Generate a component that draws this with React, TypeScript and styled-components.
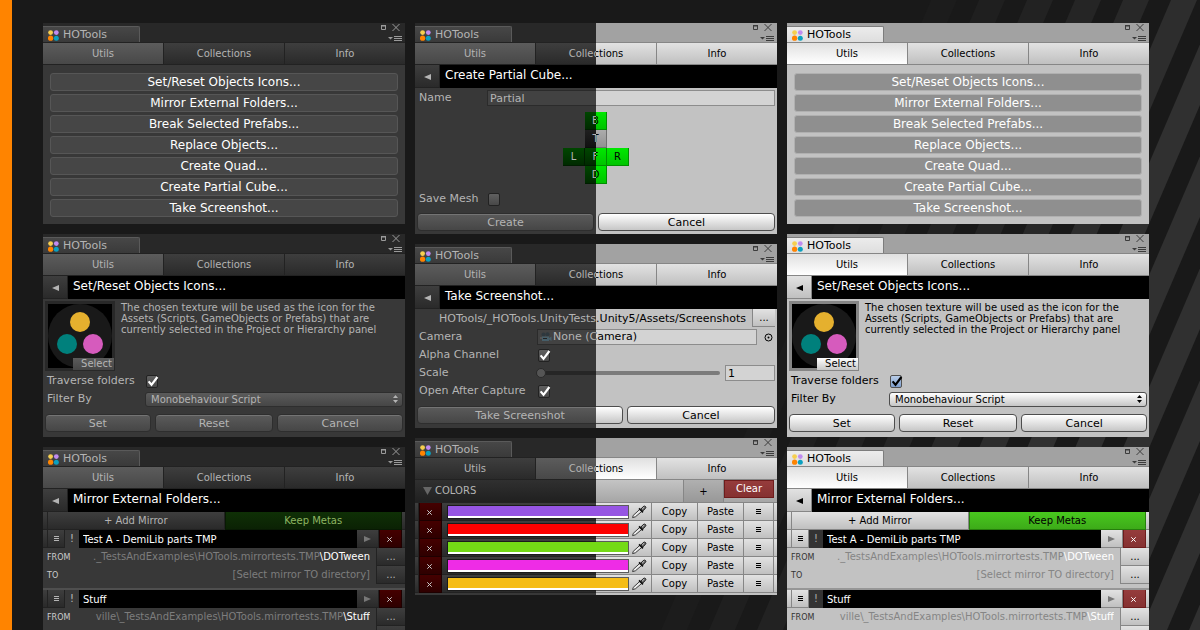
import React, { useId } from 'react';
import styled, { createGlobalStyle, css, ThemeProvider, useTheme } from 'styled-components';

type Side = 'left' | 'right';

const dark = {
  name: 'dark',
  text: '#b4b4b4',
  panel: '#383838',
  header: '#282828',
  edge: '#222222',
  tab: 'linear-gradient(#474747, #3a3a3a)',
  tabEdge: '#5a5a5a',
  bar: 'linear-gradient(#3e3e3e, #2a2a2a)',
  barOn: 'linear-gradient(#5c5c5c, #484848)',
  collection: 'linear-gradient(#303030, #202020)',
  collectionButton: 'linear-gradient(#303030, #202020)',
  utility: '#464646',
  utilityEdge: '#565656',
  utilityText: '#ffffff',
  button: 'linear-gradient(#5b5b5b, #464646)',
  buttonEdge: '#2e2e2e',
  buttonShine: '#747474',
  field: '#424242',
  fieldEdge: '#2b2b2b',
  check: 'linear-gradient(#606060, #484848)',
  checkEdge: '#222222',
  checkMark: '#ffffff',
  texture: '#282828',
  green: 'linear-gradient(#0f3006, #0b2204)',
  greenEdge: '#081a03',
  greenText: '#8fb562',
  red: 'linear-gradient(#450000, #2e0000)',
  redEdge: '#1e0000',
  redText: '#cccccc',
  faceOn: 'linear-gradient(#004600, #002a00)',
  faceOnEdge: '#001d00',
  faceOff: 'linear-gradient(#1f1f1f, #111111)',
  faceOffEdge: '#0c0c0c',
  control: '#9a9a9a',
  warnBack: '#383838',
  warn: '#b0b0b0',
  caption: '#cccccc',
  muted: '#7d7d7d',
  divider: '#4f4f4f',
  track: '#262626',
  colorEdge: '#1b1b1b',
};

const light: typeof dark = {
  name: 'light',
  text: '#000000',
  panel: '#c2c2c2',
  header: '#a2a2a2',
  edge: '#868686',
  tab: 'linear-gradient(#ececec, #dedede)',
  tabEdge: '#7d7d7d',
  bar: 'linear-gradient(#e2e2e2, #c0c0c0)',
  barOn: 'linear-gradient(#e0e0e0, #ffffff)',
  collection: 'linear-gradient(#c4c4c4, #a6a6a6)',
  collectionButton: 'linear-gradient(#b0b0b0, #989898)',
  utility: '#8f8f8f',
  utilityEdge: '#b0b0b0',
  utilityText: '#ffffff',
  button: 'linear-gradient(#ffffff, #c6c6c6)',
  buttonEdge: '#4d4d4d',
  buttonShine: '#ffffff',
  field: '#d3d3d3',
  fieldEdge: '#8c8c8c',
  check: 'linear-gradient(#b9cde8, #7f9fce)',
  checkEdge: '#515151',
  checkMark: '#000000',
  texture: '#858585',
  green: 'linear-gradient(#48c81e, #3dab19)',
  greenEdge: '#267f0c',
  greenText: '#000000',
  red: 'linear-gradient(#963c3c, #853131)',
  redEdge: '#6e1c1c',
  redText: '#ffffff',
  faceOn: 'linear-gradient(#00e800, #00c400)',
  faceOnEdge: '#008f00',
  faceOff: 'linear-gradient(#acacac, #929292)',
  faceOffEdge: '#707070',
  control: '#3c3c3c',
  warnBack: '#333333',
  warn: '#a0a0a0',
  caption: '#333333',
  muted: '#858585',
  divider: '#969696',
  track: '#7b7b7b',
  colorEdge: '#5b5b5b',
};

type Skin = typeof dark & { side?: Side };
const skinOf = (p: { theme: unknown }) => p.theme as Skin;

/* In a two-skin panel, a part that belongs to one half is shown by that half only. */
type At = { $at?: Side };
const half = css<At>`
  ${(p) => {
    const side = skinOf(p).side;
    return p.$at && side && p.$at !== side ? 'visibility: hidden;' : '';
  }}
`;

const GlobalStyle = createGlobalStyle`
  *, *::before, *::after { box-sizing: border-box; }
  body { margin: 0; background: #191919; }
  button, input, select {
    font: inherit; color: inherit; margin: 0; padding: 0; border: 0;
    border-radius: 0; background: none; appearance: none; min-width: 0;
  }
  svg { display: block; flex: none; }
`;

const Page = styled.main`
  position: relative;
  height: 100vh;
  overflow: hidden;
  border-left: 12px solid #ff8400;
  background: #191919;
  font-family: 'DejaVu Sans', Verdana, sans-serif;
  font-size: 11px;
  line-height: 16px;
`;

const StripeArt = styled.svg`
  position: absolute;
  top: 0;
  right: 0;
`;

const Columns = styled.div`
  position: relative;
  display: grid;
  grid-template-columns: repeat(3, minmax(0, 1fr));
  gap: 10px;
  padding: 23px 51px 0 31px;
`;

const Column = styled.div`
  display: flex;
  flex-direction: column;
  gap: 10px;
`;

const Panel = styled.section`
  background: ${(p) => skinOf(p).panel};
  color: ${(p) => skinOf(p).text};
`;

const Stack = styled.div`
  display: grid;
`;

const Layer = styled.div<{ $side: Side }>`
  grid-area: 1 / 1;
  min-width: 0;
  clip-path: ${(p) => (p.$side === 'left' ? 'inset(0 50% 0 0)' : 'inset(0 0 0 50%)')};
`;

const Header = styled.header`
  display: flex;
  justify-content: space-between;
  height: 20px;
  padding-top: 3px;
  background: ${(p) => skinOf(p).header};
  border-bottom: 1px solid ${(p) => skinOf(p).edge};
`;

const WindowTab = styled.h2<At>`
  display: flex;
  align-items: center;
  gap: 4px;
  width: 97px;
  height: 16px;
  margin: 0;
  padding: 1px 0 0 5px;
  font-size: 11px;
  font-weight: 400;
  line-height: 16px;
  background: ${(p) => skinOf(p).tab};
  border-top: 1px solid ${(p) => skinOf(p).tabEdge};
  border-right: 1px solid ${(p) => skinOf(p).tabEdge};
  border-top-right-radius: 2px;
  ${half}
`;

const WindowControls = styled.div<At>`
  display: grid;
  grid-template-columns: 5px 8px;
  column-gap: 6px;
  row-gap: 4px;
  align-content: start;
  justify-items: end;
  margin-top: -2px;
  padding-right: 5px;
  color: ${(p) => skinOf(p).control};
  ${half}
`;

const ControlButton = styled.button<{ $wide?: boolean }>`
  height: 7px;
  grid-column: ${(p) => (p.$wide ? '1 / -1' : 'auto')};
  margin-right: ${(p) => (p.$wide ? '-2px' : '0')};
`;

const Tabs = styled.nav`
  display: flex;
`;

const TabButton = styled.button<{ $on?: boolean } & At>`
  flex: 1;
  height: 22px;
  padding-top: 1px;
  font-size: 10px;
  background: ${(p) => (p.$on ? skinOf(p).barOn : skinOf(p).bar)};
  border-bottom: 1px solid ${(p) => skinOf(p).edge};
  border-right: 1px solid ${(p) => skinOf(p).edge};
  &:last-child { border-right: 0; }
  ${half}
`;

const TitleBar = styled.div`
  display: flex;
  height: 23px;
  background: #000000;
  color: #ffffff;
`;

const BackButton = styled.button<At>`
  display: grid;
  place-items: center;
  width: 25px;
  padding-top: 1px;
  color: ${(p) => skinOf(p).text};
  background: ${(p) => skinOf(p).bar};
  border-right: 1px solid ${(p) => skinOf(p).edge};
  border-bottom: 1px solid ${(p) => skinOf(p).edge};
  ${half}
`;

const Title = styled.h3<At>`
  margin: 0;
  padding: 2px 0 0 5px;
  font-size: 12px;
  font-weight: 400;
  line-height: 16px;
  ${half}
`;

const UtilityList = styled.div`
  display: grid;
  gap: 3px;
  padding: 8px 7px 7px;
`;

const UtilityButton = styled.button`
  height: 18px;
  font-size: 12px;
  line-height: 14px;
  color: ${(p) => skinOf(p).utilityText};
  background: ${(p) => skinOf(p).utility};
  border: 1px solid ${(p) => skinOf(p).utilityEdge};
  border-radius: 3px;
`;

const TextureRow = styled.div`
  display: flex;
  gap: 6px;
  height: 73px;
  padding: 2px 2px 1px;
`;

const TextureSlot = styled.div`
  display: grid;
  width: 70px;
  height: 70px;
  background: #000000;
  border: 3px solid ${(p) => skinOf(p).texture};
`;

const TextureArt = styled.svg`
  grid-area: 1 / 1;
`;

const SelectTexture = styled.button`
  grid-area: 1 / 1;
  align-self: end;
  justify-self: end;
  width: 41px;
  height: 12px;
  margin: 0 -2px -2px 0;
  padding-left: 6px;
  font-size: 10px;
  line-height: 12px;
  color: ${(p) => skinOf(p).text};
  background: ${(p) => skinOf(p).button};
`;

const Description = styled.p`
  flex: 1;
  margin: 0;
  padding-top: 1px;
  max-width: 268px;
  font-size: 10px;
  line-height: 11px;
`;

const FieldRow = styled.div<{ $label: number }>`
  display: grid;
  grid-template-columns: ${(p) => p.$label}px minmax(0, 1fr);
  align-items: center;
  height: 18px;
  padding: 0 2px 0 4px;
`;

const FieldLabel = styled.label<At>`
  white-space: nowrap;
  line-height: 16px;
  ${half}
`;

const CheckBoxShell = styled.span<At>`
  display: grid;
  width: 13px;
  height: 13px;
  margin-left: 1px;
  svg { grid-area: 1 / 1; pointer-events: none; color: ${(p) => skinOf(p).checkMark}; }
  ${half}
`;

const CheckBoxInput = styled.input`
  grid-area: 1 / 1;
  width: 12px;
  height: 13px;
  background: ${(p) => skinOf(p).check};
  border: 1px solid ${(p) => skinOf(p).checkEdge};
  border-radius: 2px;
`;

const SelectShell = styled.span`
  display: grid;
  align-items: center;
  svg { grid-area: 1 / 1; justify-self: end; margin-right: 5px; pointer-events: none; }
`;

const Select = styled.select`
  grid-area: 1 / 1;
  height: 15px;
  padding-left: 5px;
  font-size: 10px;
  line-height: 13px;
  color: ${(p) => skinOf(p).text};
  background: ${(p) => skinOf(p).button};
  border: 1px solid ${(p) => skinOf(p).buttonEdge};
  border-radius: 3px;
`;

const ButtonRow = styled.div<{ $columns: string; $bottom: number; $top: number }>`
  display: grid;
  grid-template-columns: ${(p) => p.$columns};
  gap: 4px;
  padding: ${(p) => `${p.$top}px 2px ${p.$bottom}px`};
`;

const PushButton = styled.button<At>`
  height: 18px;
  padding-top: 1px;
  font-size: 11px;
  line-height: 14px;
  color: ${(p) => skinOf(p).text};
  background: ${(p) => skinOf(p).button};
  border: 1px solid ${(p) => skinOf(p).buttonEdge};
  border-radius: 4px;
  box-shadow: inset 0 1px 0 ${(p) => skinOf(p).buttonShine};
  ${half}
`;

const Strip = styled.div`
  display: flex;
  height: 18px;
  padding-right: 3px;
  background: ${(p) => skinOf(p).bar};
  border-bottom: 1px solid ${(p) => skinOf(p).edge};
`;

const StripGap = styled.span<{ $width: number }>`
  width: ${(p) => p.$width}px;
  border-right: 1px solid ${(p) => skinOf(p).edge};
`;

const StripButton = styled.button<{ $width?: number } & At>`
  display: flex;
  align-items: center;
  justify-content: center;
  flex: ${(p) => (p.$width ? `0 0 ${p.$width}px` : '1 1 0')};
  height: 17px;
  font-size: 10px;
  line-height: 16px;
  border-right: 1px solid ${(p) => skinOf(p).edge};
  ${half}
`;

const KeepButton = styled(StripButton)`
  height: 18px;
  color: ${(p) => skinOf(p).greenText};
  background: ${(p) => skinOf(p).green};
  border: 1px solid ${(p) => skinOf(p).greenEdge};
  border-top: 0;
`;

const RemoveButton = styled(StripButton)`
  height: 18px;
  padding: 1px 2px 0 0;
  color: ${(p) => skinOf(p).redText};
  background: ${(p) => skinOf(p).red};
  border: 1px solid ${(p) => skinOf(p).redEdge};
  border-top: 0;
`;

const Warn = styled.span`
  display: grid;
  place-items: center;
  width: 14px;
  height: 18px;
  font-size: 11px;
  color: ${(p) => skinOf(p).warn};
  background: ${(p) => skinOf(p).warnBack};
`;

const MirrorName = styled.input`
  flex: 1;
  height: 18px;
  padding-left: 4px;
  font-size: 10px;
  color: #ffffff;
  background: #000000;
`;

const Mirror = styled.article`
  padding-bottom: 4px;
  border-bottom: 2px solid ${(p) => skinOf(p).divider};
`;

const DirRow = styled.div`
  display: flex;
  align-items: center;
  height: 18px;
  padding-left: 4px;
`;

const DirCaption = styled.span`
  flex: 0 0 31px;
  padding-top: 2px;
  font-size: 8px;
  color: ${(p) => skinOf(p).caption};
`;

const DirPath = styled.span`
  display: flex;
  flex: 1;
  justify-content: flex-end;
  min-width: 0;
  overflow: hidden;
  margin-right: 6px;
  font-size: 10px;
  line-height: 16px;
  white-space: nowrap;
  color: ${(p) => skinOf(p).muted};
  b { font-weight: 400; color: #ffffff; }
`;

const BrowseButton = styled.button<{ $width: number } & At>`
  flex: 0 0 ${(p) => p.$width}px;
  height: 18px;
  font-size: 10px;
  line-height: 16px;
  background: ${(p) => skinOf(p).bar};
  border-left: 1px solid ${(p) => skinOf(p).edge};
  border-bottom: 1px solid ${(p) => skinOf(p).edge};
  ${half}
`;

const Spaced = styled.div<{ $top: number; $bottom?: number }>`
  padding: ${(p) => `${p.$top}px 0 ${p.$bottom ?? 0}px`};
`;

const TextField = styled.input`
  width: 100%;
  height: 16px;
  padding-left: 2px;
  font-size: 11px;
  line-height: 14px;
  color: ${(p) => skinOf(p).text};
  background: ${(p) => skinOf(p).field};
  border: 1px solid ${(p) => skinOf(p).fieldEdge};
`;

const CubeGrid = styled.div`
  display: grid;
  grid-template-columns: repeat(3, 22px);
  grid-template-areas: '. b .' '. t .' 'l f r' '. d .';
  grid-auto-rows: 18px;
  justify-content: center;
  padding: 5px 0 6px;
`;

const Face = styled.button<{ $area: string; $off?: boolean } & At>`
  grid-area: ${(p) => p.$area};
  font-size: 10px;
  line-height: 16px;
  color: ${(p) => skinOf(p).text};
  background: ${(p) => (p.$off ? skinOf(p).faceOff : skinOf(p).faceOn)};
  border: solid ${(p) => (p.$off ? skinOf(p).faceOffEdge : skinOf(p).faceOnEdge)};
  border-width: 0 1px 1px 0;
  ${half}
`;

const PathRow = styled.div`
  display: flex;
  height: 18px;
  padding: 0 2px 0 4px;
`;

const PathText = styled.span`
  display: flex;
  flex: 1;
  justify-content: flex-end;
  min-width: 0;
  overflow: hidden;
  margin-right: 6px;
  line-height: 20px;
  white-space: nowrap;
`;

const ObjectRow = styled.div`
  display: grid;
  grid-template-columns: minmax(0, 1fr) 14px;
  column-gap: 4px;
  align-items: center;
`;

const ObjectField = styled.button`
  display: flex;
  align-items: center;
  gap: 1px;
  height: 16px;
  padding-left: 2px;
  line-height: 14px;
  background: ${(p) => skinOf(p).field};
  border: 1px solid ${(p) => skinOf(p).fieldEdge};
`;

const PickerButton = styled.button<At>`
  display: grid;
  place-items: center;
  ${half}
`;

const ScaleRow = styled.div`
  display: grid;
  grid-template-columns: minmax(0, 1fr) 50px;
  column-gap: 5px;
  align-items: center;
`;

const Slider = styled.input`
  width: 100%;
  height: 12px;
  &::-webkit-slider-runnable-track {
    height: 4px;
    border-radius: 2px;
    background: ${(p) => skinOf(p).track};
  }
  &::-webkit-slider-thumb {
    appearance: none;
    width: 10px;
    height: 10px;
    margin-top: -3px;
    border: 1px solid #2a2a2a;
    border-radius: 5px;
    background: #555555;
  }
`;

const CollectionBar = styled.div`
  display: flex;
  height: 23px;
  padding-right: 3px;
  background: ${(p) => skinOf(p).collection};
  border-bottom: 1px solid ${(p) => skinOf(p).edge};
`;

const CollectionToggle = styled.button<At>`
  display: flex;
  align-items: center;
  flex: 1;
  gap: 3px;
  padding-left: 8px;
  font-size: 10px;
  ${half}
  svg { color: #666666; }
`;

const AddColor = styled.button<At>`
  width: 41px;
  padding-top: 2px;
  font-size: 10px;
  background: ${(p) => skinOf(p).collectionButton};
  border: solid ${(p) => skinOf(p).edge};
  border-width: 0 1px;
  ${half}
`;

const ClearButton = styled.button<At>`
  width: 50px;
  height: 18px;
  font-size: 10px;
  color: ${(p) => skinOf(p).redText};
  background: ${(p) => skinOf(p).red};
  border: 1px solid ${(p) => skinOf(p).redEdge};
  ${half}
`;

const Swatch = styled.button<{ $color: string }>`
  flex: 1;
  height: 14px;
  margin: 2px 2px 0 5px;
  background: ${(p) => p.$color};
  border: 1px solid ${(p) => skinOf(p).colorEdge};
  box-shadow: inset 0 -2px 0 #ffffff;
`;

const Dropper = styled.button<At>`
  width: 21px;
  height: 17px;
  border-right: 1px solid ${(p) => skinOf(p).edge};
  ${half}
`;

const Logo = () => (
  <svg width="11" height="11" viewBox="0 0 11 11" aria-hidden="true">
    <circle cx="2.6" cy="2.6" r="2.4" fill="#f6cf4f" />
    <circle cx="8.3" cy="2.6" r="2.4" fill="#c08cf0" />
    <circle cx="2.6" cy="8.2" r="2.6" fill="#ff8400" />
    <circle cx="8.3" cy="8.2" r="2.5" fill="#0aa0c0" />
  </svg>
);

const ListGlyph = () => (
  <svg width="5" height="5" viewBox="0 0 5 5" aria-hidden="true">
    <path d="M0 .5h5M0 2.5h5M0 4.5h5" stroke="currentColor" />
  </svg>
);

const CrossGlyph = () => (
  <svg width="5" height="5" viewBox="0 0 5 5" aria-hidden="true">
    <path d="M.3.3l4.4 4.4M4.7.3L.3 4.7" stroke="currentColor" />
  </svg>
);

const CheckGlyph = () => (
  <svg width="13" height="13" viewBox="0 0 13 13" aria-hidden="true">
    <path d="M2.6 6.4l2.9 3.4L11.4 2" fill="none" stroke="currentColor" strokeWidth="2.2" />
  </svg>
);

const DropperGlyph = () => (
  <svg width="16" height="14" viewBox="0 0 16 14" aria-hidden="true">
    <path d="M1.6 12.6l.6-2.2L9 4.2l2 2-6.600 5.600z" fill="#ececec" stroke="#2a2a2a" strokeWidth=".9" />
    <path d="M8 3.400l4 4" stroke="#111" strokeWidth="1.600" />
    <path d="M9.800 4.200l2.400-2.600q1.400-1 2.300-.1t-.2 2.100l-2.500 2.300z" fill="#6a6a6a" stroke="#111" strokeWidth=".9" />
    <path d="M11.200 4l2-1.900" stroke="#dddddd" strokeWidth=".8" />
  </svg>
);

const CameraGlyph = () => (
  <svg width="12" height="10" viewBox="0 0 12 10" aria-hidden="true">
    <circle cx="3.5" cy="2.5" r="2" fill="#2e383e" />
    <circle cx="7.5" cy="2.2" r="2" fill="#2e383e" />
    <path d="M2 4.500h7v4.500H2zM9 6l2.500-1.500v4.500L9 7.600z" fill="#465e69" />
    <path d="M3 6.500h4" stroke="#222" />
    <path d="M0 6h2" stroke="#666" />
  </svg>
);

const shades = ['#1c1c1c', '#1f1f1f', '#222222', '#252525', '#282828', '#2d2d2d', '#303030'];

function Stripes() {
  const starts = Array.from({ length: 12 }, (_, i) => 31 + i * 48);
  return (
    <StripeArt width="300" height="630" viewBox="0 0 300 630" overflow="visible" aria-hidden="true">
      {starts.map((x, i) => (
        <path key={x} d={`M${x} 0h26l-270 630h-26z`} fill={shades[Math.min(i, 6)]} />
      ))}
    </StripeArt>
  );
}

const tabNames = ['Utils', 'Collections', 'Info'];
const tabSides: (Side | undefined)[] = ['left', undefined, 'right'];

function WindowFrame({ active = 'Utils', children }: { active?: string; children: React.ReactNode }) {
  return (
    <Panel>
      <Header>
        <WindowTab $at="left"><Logo />HOTools</WindowTab>
        <WindowControls $at="right">
          <ControlButton aria-label="Maximize">
            <svg width="5" height="5" viewBox="0 0 5 5"><path d="M.5 1h4v3.5h-4zM0 .5h5" fill="none" stroke="currentColor" /></svg>
          </ControlButton>
          <ControlButton aria-label="Close">
            <svg width="8" height="7" viewBox="0 0 8 7"><path d="M.5 0l7 7M7.5 0l-7 7" stroke="currentColor" /></svg>
          </ControlButton>
          <ControlButton $wide aria-label="Window menu">
            <svg width="14" height="5" viewBox="0 0 14 5">
              <path d="M0 1h5L2.500 3.500z" fill="currentColor" />
              <path d="M6 .5h8M6 2.500h8M6 4.500h8" stroke="currentColor" />
            </svg>
          </ControlButton>
        </WindowControls>
      </Header>
      <Tabs>
        {tabNames.map((name, i) => (
          <TabButton key={name} $on={name === active} $at={tabSides[i]}>{name}</TabButton>
        ))}
      </Tabs>
      {children}
    </Panel>
  );
}

function TitleLine({ children }: { children: string }) {
  return (
    <TitleBar>
      <BackButton aria-label="Back" $at="left">
        <svg width="7" height="6" viewBox="0 0 7 6"><path d="M7 0v6L0 3z" fill="currentColor" /></svg>
      </BackButton>
      <Title $at="left">{children}</Title>
    </TitleBar>
  );
}

function CheckBox({ id, checked, at }: { id: string; checked?: boolean; at?: Side }) {
  return (
    <CheckBoxShell $at={at}>
      <CheckBoxInput type="checkbox" id={id} defaultChecked={checked} />
      {checked && <CheckGlyph />}
    </CheckBoxShell>
  );
}

const utilities = [
  'Set/Reset Objects Icons...',
  'Mirror External Folders...',
  'Break Selected Prefabs...',
  'Replace Objects...',
  'Create Quad...',
  'Create Partial Cube...',
  'Take Screenshot...',
];

function UtilsWindow() {
  return (
    <WindowFrame>
      <UtilityList>
        {utilities.map((name) => <UtilityButton key={name}>{name}</UtilityButton>)}
      </UtilityList>
    </WindowFrame>
  );
}

function IconsWindow() {
  const id = useId();
  return (
    <WindowFrame>
      <TitleLine>Set/Reset Objects Icons...</TitleLine>
      <TextureRow>
        <TextureSlot>
          <TextureArt width="64" height="64" viewBox="0 0 64 64" aria-hidden="true">
            <circle cx="32" cy="32" r="32" fill="#191919" />
            <circle cx="32" cy="18" r="10" fill="#e5b02e" />
            <circle cx="19" cy="40" r="10" fill="#00807c" />
            <circle cx="45" cy="40" r="10" fill="#d65bbd" />
          </TextureArt>
          <SelectTexture>Select</SelectTexture>
        </TextureSlot>
        <Description>
          The chosen texture will be used as the icon for the Assets (Scripts, GameObjects or
          Prefabs) that are currently selected in the Project or Hierarchy panel
        </Description>
      </TextureRow>
      <FieldRow $label={98}>
        <FieldLabel htmlFor={`${id}-t`}>Traverse folders</FieldLabel>
        <CheckBox id={`${id}-t`} checked />
      </FieldRow>
      <FieldRow $label={98}>
        <FieldLabel htmlFor={`${id}-f`}>Filter By</FieldLabel>
        <SelectShell>
          <Select id={`${id}-f`}><option>Monobehaviour Script</option></Select>
          <svg width="5" height="8" viewBox="0 0 5 8"><path d="M0 3l2.500-3L5 3zM0 5l2.500 3L5 5z" fill="currentColor" /></svg>
        </SelectShell>
      </FieldRow>
      <ButtonRow $columns="106fr 119fr 126fr" $top={6} $bottom={5}>
        <PushButton>Set</PushButton>
        <PushButton>Reset</PushButton>
        <PushButton>Cancel</PushButton>
      </ButtonRow>
    </WindowFrame>
  );
}

function MirrorHead({ name }: { name: string }) {
  return (
    <Strip>
      <StripGap $width={5} />
      <StripButton $width={17} aria-label="Reorder"><ListGlyph /></StripButton>
      <Warn>!</Warn>
      <MirrorName aria-label="Mirror name" defaultValue={name} />
      <StripButton $width={22} aria-label="Run mirror">
        <svg width="7" height="6" viewBox="0 0 7 6"><path d="M0 0l7 3-7 3z" fill="#777777" /></svg>
      </StripButton>
      <RemoveButton $width={23} aria-label="Remove mirror"><CrossGlyph /></RemoveButton>
    </Strip>
  );
}

function MirrorWindow() {
  return (
    <WindowFrame>
      <TitleLine>Mirror External Folders...</TitleLine>
      <Strip>
        <StripGap $width={5} />
        <StripButton>+ Add Mirror</StripButton>
        <KeepButton>Keep Metas</KeepButton>
      </Strip>
      <Mirror>
        <MirrorHead name="Test A - DemiLib parts TMP" />
        <DirRow>
          <DirCaption>FROM</DirCaption>
          <DirPath>._TestsAndExamples\HOTools.mirrortests.TMP<b>\DOTween</b></DirPath>
          <BrowseButton $width={29}>...</BrowseButton>
        </DirRow>
        <DirRow>
          <DirCaption>TO</DirCaption>
          <DirPath>[Select mirror TO directory]</DirPath>
          <BrowseButton $width={29}>...</BrowseButton>
        </DirRow>
      </Mirror>
      <Mirror>
        <MirrorHead name="Stuff" />
        <DirRow>
          <DirCaption>FROM</DirCaption>
          <DirPath>ville\_TestsAndExamples\HOTools.mirrortests.TMP<b>\Stuff</b></DirPath>
          <BrowseButton $width={29}>...</BrowseButton>
        </DirRow>
        <DirRow>
          <DirCaption />
          <DirPath />
          <BrowseButton $width={29} aria-label="Browse" />
        </DirRow>
      </Mirror>
    </WindowFrame>
  );
}

function CubeWindow() {
  const id = useId();
  return (
    <WindowFrame>
      <TitleLine>Create Partial Cube...</TitleLine>
      <Spaced $top={1}>
        <FieldRow $label={68}>
          <FieldLabel $at="left" htmlFor={`${id}-n`}>Name</FieldLabel>
          <CubeName id={`${id}-n`} />
        </FieldRow>
      </Spaced>
      <CubeGrid>
        <Face $area="b">B</Face>
        <Face $area="t" $off>T</Face>
        <Face $area="l" $at="left">L</Face>
        <Face $area="f">F</Face>
        <Face $area="r" $at="right">R</Face>
        <Face $area="d">D</Face>
      </CubeGrid>
      <FieldRow $label={68}>
        <FieldLabel $at="left" htmlFor={`${id}-s`}>Save Mesh</FieldLabel>
        <CheckBox id={`${id}-s`} at="left" />
      </FieldRow>
      <ButtonRow $columns="1fr 1fr" $top={5} $bottom={3}>
        <PushButton $at="left">Create</PushButton>
        <PushButton $at="right">Cancel</PushButton>
      </ButtonRow>
    </WindowFrame>
  );
}

/* The name's text lies in the left half; the right half draws only the box. */
function CubeName({ id }: { id: string }) {
  const { side } = useTheme() as Skin;
  return <TextField id={id} defaultValue={side === 'right' ? '' : 'Partial'} />;
}

function ScreenshotWindow() {
  const id = useId();
  return (
    <WindowFrame>
      <TitleLine>Take Screenshot...</TitleLine>
      <PathRow>
        <PathText>HOTools/_HOTools.UnityTests.Unity5/Assets/Screenshots</PathText>
        <BrowseButton $width={23} $at="right">...</BrowseButton>
      </PathRow>
      <Spaced $top={1}>
        <FieldRow $label={118}>
          <FieldLabel $at="left" htmlFor={`${id}-c`}>Camera</FieldLabel>
          <ObjectRow>
            <ObjectField id={`${id}-c`}><CameraGlyph />None (Camera)</ObjectField>
            <PickerButton $at="right" aria-label="Pick camera">
              <svg width="9" height="9" viewBox="0 0 9 9">
                <circle cx="4.5" cy="4.5" r="3.5" fill="none" stroke="currentColor" />
                <circle cx="4.5" cy="4.5" r="1" fill="currentColor" />
              </svg>
            </PickerButton>
          </ObjectRow>
        </FieldRow>
        <FieldRow $label={118}>
          <FieldLabel $at="left" htmlFor={`${id}-a`}>Alpha Channel</FieldLabel>
          <CheckBox id={`${id}-a`} checked at="left" />
        </FieldRow>
        <FieldRow $label={117}>
          <FieldLabel $at="left" htmlFor={`${id}-s`}>Scale</FieldLabel>
          <ScaleRow>
            <Slider id={`${id}-s`} type="range" min={1} max={10} defaultValue={1} />
            <ScaleValue />
          </ScaleRow>
        </FieldRow>
        <FieldRow $label={118}>
          <FieldLabel $at="left" htmlFor={`${id}-o`}>Open After Capture</FieldLabel>
          <CheckBox id={`${id}-o`} checked at="left" />
        </FieldRow>
      </Spaced>
      <ButtonRow $columns="206fr 148fr" $top={6} $bottom={4}>
        <PushButton>Take Screenshot</PushButton>
        <PushButton $at="right">Cancel</PushButton>
      </ButtonRow>
    </WindowFrame>
  );
}

function ScaleValue() {
  const { side } = useTheme() as Skin;
  return <TextField aria-label="Scale value" defaultValue={side === 'left' ? '' : '1'} />;
}

const colors = ['#9655e3', '#fd0000', '#74da16', '#ee2ce6', '#f5bd17'];

function ColorsWindow() {
  return (
    <WindowFrame active="Collections">
      <CollectionBar>
        <CollectionToggle $at="left">
          <svg width="9" height="8" viewBox="0 0 9 8" aria-hidden="true"><path d="M0 0h9L4.500 8z" fill="currentColor" /></svg>
          COLORS
        </CollectionToggle>
        <AddColor $at="right">+</AddColor>
        <ClearButton $at="right">Clear</ClearButton>
      </CollectionBar>
      <Spaced $top={0} $bottom={2}>
        {colors.map((color) => (
          <Strip key={color}>
            <StripGap $width={4} />
            <RemoveButton $width={23} $at="left" aria-label="Remove color"><CrossGlyph /></RemoveButton>
            <Swatch $color={color} aria-label={`Color ${color}`} />
            <Dropper $at="right" aria-label="Pick color"><DropperGlyph /></Dropper>
            <StripButton $width={46} $at="right">Copy</StripButton>
            <StripButton $width={46} $at="right">Paste</StripButton>
            <StripButton $width={30} $at="right" aria-label="Reorder"><ListGlyph /></StripButton>
          </Strip>
        ))}
      </Spaced>
    </WindowFrame>
  );
}

function TwoSkins({ children }: { children: React.ReactNode }) {
  return (
    <Stack>
      <ThemeProvider theme={{ ...dark, side: 'left' }}>
        <Layer $side="left">{children}</Layer>
      </ThemeProvider>
      <ThemeProvider theme={{ ...light, side: 'right' }}>
        <Layer $side="right">{children}</Layer>
      </ThemeProvider>
    </Stack>
  );
}

export default function App() {
  return (
    <Page>
      <GlobalStyle />
      <Stripes />
      <Columns>
        <ThemeProvider theme={dark}>
          <Column>
            <UtilsWindow />
            <IconsWindow />
            <MirrorWindow />
          </Column>
        </ThemeProvider>
        <Column>
          <TwoSkins><CubeWindow /></TwoSkins>
          <TwoSkins><ScreenshotWindow /></TwoSkins>
          <TwoSkins><ColorsWindow /></TwoSkins>
        </Column>
        <ThemeProvider theme={light}>
          <Column>
            <UtilsWindow />
            <IconsWindow />
            <MirrorWindow />
          </Column>
        </ThemeProvider>
      </Columns>
    </Page>
  );
}
